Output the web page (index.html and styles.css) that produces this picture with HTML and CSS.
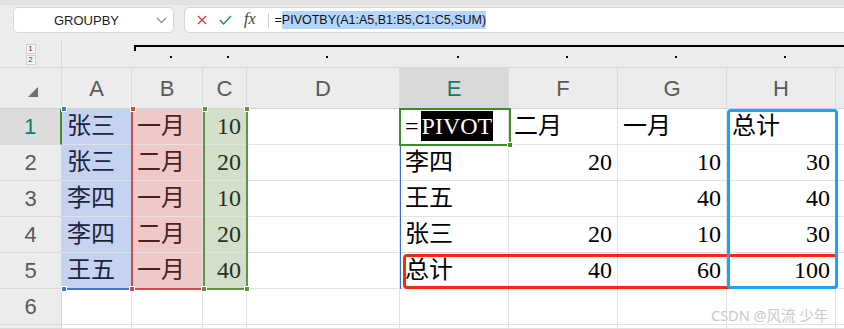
FILE: index.html
```html
<!DOCTYPE html>
<html lang="zh">
<head>
    <meta charset="UTF-8">
    <title>PIVOTBY</title>
    <link rel="stylesheet" href="styles.css">
</head>
<body>
    <div class="toolbar">
        <div class="namebox">
            <span class="name">GROUPBY</span>
            <svg class="chevron" width="11" height="7" viewBox="0 0 11 7"><polyline points="1,1 5.5,5.5 10,1" fill="none" stroke="#888" stroke-width="1.2"/></svg>
        </div>
        <div class="formula">
            <svg class="fx-btn" width="10" height="10" viewBox="0 0 10 10"><path d="M1 1 L9 9 M9 1 L1 9" stroke="#c8394b" stroke-width="1.3"/></svg>
            <svg class="fx-btn" width="13" height="10" viewBox="0 0 13 10"><polyline points="1,5 4.5,9 12,1" fill="none" stroke="#23875a" stroke-width="1.3"/></svg>
            <span class="fx-label">fx</span>
            <span class="divider"></span>
            <span class="formula-text">=<span class="sel">PIVOTBY(A1:A5,B1:B5,C1:C5,SUM)</span></span>
        </div>
    </div>

    <div class="outline">
        <div class="levels">
            <span class="lvl">1</span>
            <span class="lvl">2</span>
        </div>
        <div class="group-line"></div>
        <span class="dot" style="left:170px"></span>
        <span class="dot" style="left:227px"></span>
        <span class="dot" style="left:326px"></span>
        <span class="dot" style="left:457px"></span>
        <span class="dot" style="left:566px"></span>
        <span class="dot" style="left:675px"></span>
        <span class="dot" style="left:784px"></span>
    </div>

    <div class="sheet">
        <!-- header row -->
        <div class="hd corner"><span class="tri"></span></div>
        <div class="hd">A</div>
        <div class="hd">B</div>
        <div class="hd">C</div>
        <div class="hd">D</div>
        <div class="hd active">E</div>
        <div class="hd">F</div>
        <div class="hd">G</div>
        <div class="hd">H</div>
        <div class="hd"></div>

        <!-- row 1 -->
        <div class="rh active">1</div>
        <div class="c ra">张三</div>
        <div class="c rb">一月</div>
        <div class="c rc num">10</div>
        <div class="c"></div>
        <div class="c edit">=<span class="hl">PIVOT</span></div>
        <div class="c">二月</div>
        <div class="c">一月</div>
        <div class="c">总计</div>
        <div class="c"></div>

        <!-- row 2 -->
        <div class="rh">2</div>
        <div class="c ra">张三</div>
        <div class="c rb">二月</div>
        <div class="c rc num">20</div>
        <div class="c"></div>
        <div class="c">李四</div>
        <div class="c num">20</div>
        <div class="c num">10</div>
        <div class="c num">30</div>
        <div class="c"></div>

        <!-- row 3 -->
        <div class="rh">3</div>
        <div class="c ra">李四</div>
        <div class="c rb">一月</div>
        <div class="c rc num">10</div>
        <div class="c"></div>
        <div class="c">王五</div>
        <div class="c num"></div>
        <div class="c num">40</div>
        <div class="c num">40</div>
        <div class="c"></div>

        <!-- row 4 -->
        <div class="rh">4</div>
        <div class="c ra">李四</div>
        <div class="c rb">二月</div>
        <div class="c rc num">20</div>
        <div class="c"></div>
        <div class="c">张三</div>
        <div class="c num">20</div>
        <div class="c num">10</div>
        <div class="c num">30</div>
        <div class="c"></div>

        <!-- row 5 -->
        <div class="rh">5</div>
        <div class="c ra">王五</div>
        <div class="c rb">一月</div>
        <div class="c rc num">40</div>
        <div class="c"></div>
        <div class="c">总计</div>
        <div class="c num">40</div>
        <div class="c num">60</div>
        <div class="c num">100</div>
        <div class="c"></div>

        <!-- row 6 -->
        <div class="rh">6</div>
        <div class="c"></div><div class="c"></div><div class="c"></div><div class="c"></div>
        <div class="c"></div><div class="c"></div><div class="c"></div><div class="c"></div><div class="c"></div>

        <!-- row 7 (cut off) -->
        <div class="rh"></div>
        <div class="c"></div><div class="c"></div><div class="c"></div><div class="c"></div>
        <div class="c"></div><div class="c"></div><div class="c"></div><div class="c"></div><div class="c"></div>

        <!-- reference highlights -->
        <div class="range range-a"><i class="h tl"></i><i class="h bl"></i></div>
        <div class="range range-b"><i class="h tl"></i><i class="h bl"></i></div>
        <div class="range range-c"><i class="h tl"></i><i class="h bl"></i><i class="h tr"></i><i class="h br"></i></div>
        <div class="spill"></div>
        <div class="active-cell"><i class="handle"></i></div>
        <div class="mark mark-total"></div>
        <div class="mark mark-col"></div>
        <div class="watermark">CSDN @风流 少年</div>
    </div>
</body>
</html>
```

FILE: styles.css
```css
* {
    box-sizing: border-box;
}
body {
    margin: 0;
    width: 844px;
    height: 329px;
    overflow: hidden;
    background-color: #ececec;
    font-family: "Liberation Sans", Arial, sans-serif;
}

/* toolbar */
.toolbar {
    height: 40px;
    display: flex;
    gap: 10px;
    padding: 2px 0 0 13px;
    border-top: 5px solid #e3e3e3;
}
.namebox {
    width: 161px;
    height: 26px;
    background: #fff;
    border: 1px solid #d6d6d6;
    border-radius: 5px;
    display: flex;
    align-items: center;
    padding: 0 6px 0 40px;
}
.name {
    flex: 1;
    font-size: 13px;
    color: #222;
}
.formula {
    flex: 1;
    height: 26px;
    margin-right: -8px;
    background: #fff;
    border: 1px solid #d6d6d6;
    border-radius: 5px 0 0 5px;
    display: flex;
    align-items: center;
    padding-left: 12px;
}
.fx-btn {
    margin-right: 12px;
}
.fx-label {
    font-family: "Liberation Serif", serif;
    font-style: italic;
    font-size: 16px;
    color: #444;
    margin-top: -2px;
}
.divider {
    width: 1px;
    height: 15px;
    background: #cfcfcf;
    margin: 0 6px 0 12px;
}
.formula-text {
    font-size: 12.5px;
    color: #111;
}
.formula-text .sel {
    background: #b4d6fd;
    padding: 2px 0;
}

/* outline bar */
.outline {
    height: 28px;
    position: relative;
    border-bottom: 1px solid #d8d8d8;
}
.levels {
    width: 62px;
    height: 100%;
    border-right: 1px solid #d8d8d8;
    display: flex;
    flex-direction: column;
    align-items: center;
    padding: 4px 0 0 0;
    gap: 1px;
}
.lvl {
    width: 10px;
    height: 10px;
    background: #f7f7f7;
    border: 1px solid #d2d2d2;
    font-size: 8px;
    line-height: 8px;
    text-align: center;
    color: #333;
}
.group-line {
    position: absolute;
    left: 134px;
    right: 0;
    top: 5px;
    height: 6px;
    border-top: 2px solid #000;
    border-left: 2px solid #000;
}
.dot {
    position: absolute;
    top: 16px;
    width: 2px;
    height: 2px;
    background: #000;
}

/* sheet */
.sheet {
    position: relative;
    display: grid;
    grid-template-columns: 62px 70px 71px 44px 153px 109px 109px 109px 109px 1fr;
    grid-template-rows: 41px repeat(6, 36px) 4px;
    background: #fff;
}
.hd {
    background: #ececec;
    border-right: 1px solid #d9d9d9;
    border-bottom: 1px solid #d3d3d3;
    font-size: 22px;
    color: #5a5a5a;
    display: flex;
    align-items: center;
    justify-content: center;
    padding-top: 2px;
}
.hd.active {
    background: #d9d9d9;
    color: #0f7b6c;
}
.tri {
    width: 0;
    height: 0;
    border-left: 10px solid transparent;
    border-bottom: 10px solid #6f6f6f;
    margin: 6px 0 0 4px;
}
.rh {
    background: #ececec;
    border-right: 1px solid #d6d6d6;
    border-bottom: 1px solid #dadada;
    font-size: 22px;
    color: #5a5a5a;
    display: flex;
    align-items: center;
    justify-content: center;
    overflow: hidden;
}
.rh.active {
    background: #dcdcdc;
    color: #0f7b6c;
    border-right: 2px solid #3e8d2b;
}
.c {
    border-right: 1px solid #e2e2e2;
    border-bottom: 1px solid #e2e2e2;
    font-family: "Liberation Serif", "Noto Sans CJK SC", serif;
    font-size: 24px;
    line-height: 35px;
    padding: 0 5px;
    color: #000;
    white-space: nowrap;
    overflow: hidden;
}
.c.num {
    text-align: right;
}
.c.ra {
    background: #c6d3f0;
    color: #1c2540;
}
.c.rb {
    background: #efc9c8;
    color: #4a2222;
}
.c.rc {
    background: #d3dfc8;
    color: #24331c;
}
.c.edit {
    overflow: visible;
}
.hl {
    background: #000;
    color: #fff;
    margin-left: 2px;
    padding: 2px 1px;
}

/* overlays */
.range {
    position: absolute;
    top: 41px;
    height: 181px;
}
.range-a {
    left: 62px;
    width: 71px;
    border-bottom: 2px solid #4a74d0;
}
.range-b {
    left: 131px;
    width: 73px;
    border-left: 2px solid #c9504c;
    border-bottom: 2px solid #c9504c;
}
.range-c {
    left: 203px;
    width: 45px;
    border: 2px solid #5f9444;
    border-top: none;
}
.h {
    position: absolute;
    width: 6px;
    height: 6px;
    border: 1px solid #fff;
}
.range-a .h { background: #4a74d0; }
.range-b .h { background: #c9504c; }
.range-c .h { background: #5f9444; }
.tl { top: -3px; left: -3px; }
.tr { top: -3px; right: -4px; }
.bl { bottom: -4px; left: -4px; }
.br { bottom: -4px; right: -4px; }
.range-a .tl { left: -1px; }
.range-a .bl { left: -1px; }

.spill {
    position: absolute;
    left: 400px;
    top: 77px;
    width: 1px;
    height: 144px;
    background: #3b6fd6;
}
.active-cell {
    position: absolute;
    left: 399px;
    top: 40px;
    width: 112px;
    height: 38px;
    border: 2px solid #3e8d2b;
}
.handle {
    position: absolute;
    right: -4px;
    bottom: -4px;
    width: 6px;
    height: 6px;
    background: #3e8d2b;
    border: 1px solid #fff;
}
.mark {
    position: absolute;
    border-radius: 4px;
}
.mark-total {
    left: 403px;
    top: 186px;
    width: 435px;
    height: 35px;
    border: 3px solid #fd2a06;
}
.mark-col {
    left: 727px;
    top: 41px;
    width: 111px;
    height: 180px;
    border: 3px solid #1aa5fd;
}
.watermark {
    position: absolute;
    left: 711px;
    top: 236px;
    font-size: 14.5px;
    color: #c9c9c9;
    font-family: "Noto Sans", "Noto Sans CJK SC", sans-serif;
}
```
